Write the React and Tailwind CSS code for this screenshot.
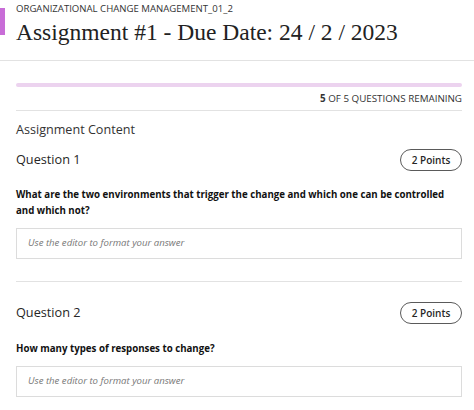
import React from 'react'

const Question = ({ title, points, prompt, gap }) => {
    return (
        <div>
            <div className="flex items-center justify-between h-[22px]">
                <h3 className="text-[12.7px] text-[#262626] font-medium">{title}</h3>
                <span className="h-[22px] w-[62px] flex items-center justify-center rounded-full border-[1.5px] border-[#5a5a5a] text-[10px] font-semibold text-[#262626]">
                    {points}
                </span>
            </div>
            <p className={`${gap} text-[9.7px] leading-[16px] font-bold text-[#111]`}>{prompt}</p>
            <div className="mt-[9px] h-[31px] border border-[#dcdcdc] flex items-center px-[11px]">
                <span className="text-[9.6px] italic text-[#777]">Use the editor to format your answer</span>
            </div>
        </div>
    )
}

const App = () => {
    return (
        <div className="w-[474px] h-[410px] bg-white overflow-hidden" style={{ fontFamily: '"Open Sans", sans-serif' }}>
            <div className="relative pt-[2px] pb-[13px] pl-4 pr-3 border-b border-[#e2e2e2]">
                <div className="absolute left-0 top-[8px] w-[5px] h-[27px] bg-[#c86dd7]" />
                <div className="text-[9.6px] leading-[14px] text-[#333]">ORGANIZATIONAL CHANGE MANAGEMENT_01_2</div>
                <h1 className="text-[23.5px] leading-[30px] text-[#222] mt-[1px]" style={{ fontFamily: '"Liberation Serif", serif' }}>
                    Assignment #1 - Due Date: 24 / 2 / 2023
                </h1>
            </div>
            <div className="pl-4 pr-3">
                <div className="mt-[22px] h-[4px] rounded-full bg-[#ecd3ef]" />
                <div className="mt-[5px] text-right text-[9.8px] leading-[14px] text-[#333]">
                    <span className="font-bold">5</span> OF 5 QUESTIONS REMAINING
                </div>
                <div className="mt-[4px] border-b border-[#e2e2e2]" />
                <div className="mt-[10px] text-[12.6px] leading-[18px] text-[#333]">Assignment Content</div>
                <div className="mt-[10px]">
                    <Question
                        title="Question 1"
                        points="2 Points"
                        gap="mt-[16px]"
                        prompt="What are the two environments that trigger the change and which one can be controlled and which not?"
                    />
                </div>
                <div className="mt-[22px] border-b border-[#e2e2e2]" />
                <div className="mt-[20px]">
                    <Question title="Question 2" points="2 Points" gap="mt-[17px]" prompt="How many types of responses to change?" />
                </div>
            </div>
        </div>
    )
}

export default App
